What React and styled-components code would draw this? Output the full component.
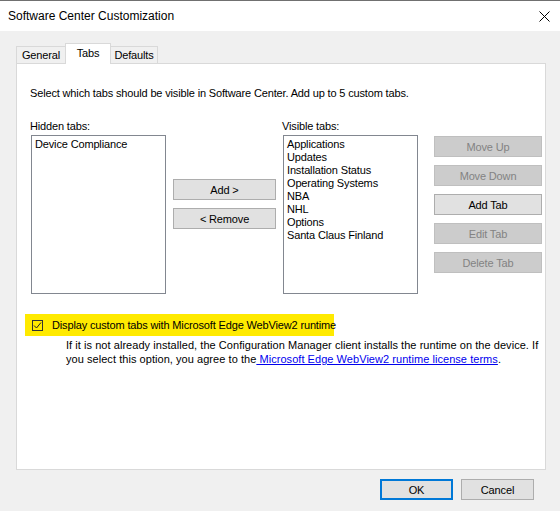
import React, { useState } from 'react';
import styled, { createGlobalStyle } from 'styled-components';

const GlobalStyle = createGlobalStyle`
    html, body {
        margin: 0;
        padding: 0;
        background: #f0f0f0;
    }
    body {
        font-family: "Liberation Sans", Arial, sans-serif;
        font-size: 11px;
        letter-spacing: -0.15px;
        color: #000;
    }
`;

const hiddenTabs = ['Device Compliance'];

const visibleTabs = [
    'Applications',
    'Updates',
    'Installation Status',
    'Operating Systems',
    'NBA',
    'NHL',
    'Options',
    'Santa Claus Finland',
];

const sideButtons = [
    { label: 'Move Up', disabled: true },
    { label: 'Move Down', disabled: true },
    { label: 'Add Tab', disabled: false },
    { label: 'Edit Tab', disabled: true },
    { label: 'Delete Tab', disabled: true },
];

// tab captions with their widths in px
const pageTabs = [
    { name: 'General', width: 50 },
    { name: 'Tabs', width: 46 },
    { name: 'Defaults', width: 48 },
];

function CheckMark() {
    return (
        <svg width="9" height="9" viewBox="0 0 9 9">
            <path d="M1 4.5 L3.5 7 L8 1.5" fill="none" stroke="#222" strokeWidth="1" />
        </svg>
    );
}

function CloseIcon() {
    return (
        <svg width="11" height="11" viewBox="0 0 11 11">
            <path d="M0.5 0.5 L10.5 10.5 M10.5 0.5 L0.5 10.5" stroke="#000" strokeWidth="1" />
        </svg>
    );
}

function ListBox({ items }) {
    return (
        <List>
            {items.map(item => (
                <ListItem key={item}>{item}</ListItem>
            ))}
        </List>
    );
}

export default function App() {
    const [tab] = useState('Tabs');
    const [useWebView, setUseWebView] = useState(true);

    return (
        <Window>
            <GlobalStyle />
            <TitleBar>
                <Title>Software Center Customization</Title>
                <CloseButton>
                    <CloseIcon />
                </CloseButton>
            </TitleBar>

            <Body>
                <TabStrip>
                    {pageTabs.map(t => (
                        <Tab key={t.name} $active={t.name === tab} $w={t.width}>
                            {t.name}
                        </Tab>
                    ))}
                </TabStrip>

                <Panel>
                    <Intro>Select which tabs should be visible in Software Center. Add up to 5 custom tabs.</Intro>

                    <Columns>
                        <ListColumn>
                            <Label>Hidden tabs:</Label>
                            <ListBox items={hiddenTabs} />
                        </ListColumn>

                        <ButtonColumn $top={59} $w={103} $left={7} $right={6}>
                            <Button>Add &gt;</Button>
                            <Button>&lt; Remove</Button>
                        </ButtonColumn>

                        <ListColumn>
                            <Label>Visible tabs:</Label>
                            <ListBox items={visibleTabs} />
                        </ListColumn>

                        <ButtonColumn $top={16} $w={108} $left={16} $right={0}>
                            {sideButtons.map(b => (
                                <Button key={b.label} disabled={b.disabled}>
                                    {b.label}
                                </Button>
                            ))}
                        </ButtonColumn>
                    </Columns>

                    <Highlight onClick={() => setUseWebView(!useWebView)}>
                        <CheckBox>{useWebView && <CheckMark />}</CheckBox>
                        <span>Display custom tabs with Microsoft Edge WebView2 runtime</span>
                    </Highlight>

                    <Note>
                        If it is not already installed, the Configuration Manager client installs the runtime on the device. If
                        <br />
                        you select this option, you agree to the
                        <Link href="#"> Microsoft Edge WebView2 runtime license terms</Link>.
                    </Note>
                </Panel>

                <Footer>
                    <DialogButton $primary>OK</DialogButton>
                    <DialogButton>Cancel</DialogButton>
                </Footer>
            </Body>
        </Window>
    );
}

const Window = styled.div`
    width: 560px;
    height: 511px;
    display: flex;
    flex-direction: column;
    background: #f0f0f0;
    overflow: hidden;
`;

const TitleBar = styled.div`
    height: 30px;
    border-top: 1px solid #707070;
    background: #fff;
    display: flex;
    align-items: center;
    justify-content: space-between;
    padding: 0 10px 0 8px;
`;

const Title = styled.div`
    font-size: 12px;
    letter-spacing: 0;
    line-height: 30px;
    color: #000;
`;

const CloseButton = styled.div`
    display: flex;
    width: 11px;
    height: 11px;
`;

const Body = styled.div`
    padding: 12px 14px 0 16px;
    display: flex;
    flex-direction: column;
`;

const TabStrip = styled.div`
    display: flex;
    align-items: flex-end;
    height: 20px;
`;

const Tab = styled.div`
    position: relative;
    box-sizing: border-box;
    width: ${p => p.$w}px;
    height: ${p => (p.$active ? 21 : 17)}px;
    margin-bottom: ${p => (p.$active ? -1 : 0)}px;
    margin-left: ${p => (p.$active ? -1 : 0)}px;
    margin-right: ${p => (p.$active ? -1 : 0)}px;
    padding-bottom: ${p => (p.$active ? 2 : 0)}px;
    z-index: ${p => (p.$active ? 1 : 0)};
    background: ${p => (p.$active ? '#fff' : '#f0f0f0')};
    border: 1px solid #d9d9d9;
    border-bottom: none;
    display: flex;
    align-items: center;
    justify-content: center;
    line-height: 13px;
`;

const Panel = styled.div`
    box-sizing: border-box;
    width: 530px;
    height: 407px;
    background: #fff;
    border: 1px solid #d9d9d9;
    padding: 23px 0 0 8px;
    display: flex;
    flex-direction: column;
`;

const Intro = styled.div`
    line-height: 13px;
    padding-left: 5px;
`;

const Columns = styled.div`
    display: flex;
    align-items: flex-start;
    margin: 20px 0 0 5px;
`;

const ListColumn = styled.div`
    flex-shrink: 0;
    width: 136px;
    display: flex;
    flex-direction: column;
`;

const Label = styled.div`
    line-height: 13px;
    margin-bottom: 2px;
`;

const List = styled.div`
    box-sizing: border-box;
    width: 135px;
    height: 159px;
    margin-left: 1px;
    border: 1px solid #828790;
    background: #fff;
    padding: 2px 3px;
`;

const ListItem = styled.div`
    line-height: 13px;
    white-space: nowrap;
`;

const ButtonColumn = styled.div`
    flex-shrink: 0;
    width: ${p => p.$w}px;
    margin: ${p => p.$top}px ${p => p.$right}px 0 ${p => p.$left}px;
    display: flex;
    flex-direction: column;
    gap: 8px;
`;

const Button = styled.button`
    box-sizing: border-box;
    height: 21px;
    width: 100%;
    padding: 0;
    font-family: inherit;
    font-size: 11px;
    letter-spacing: inherit;
    border: 1px solid ${p => (p.disabled ? '#bfbfbf' : '#adadad')};
    background: ${p => (p.disabled ? '#cccccc' : '#e1e1e1')};
    color: ${p => (p.disabled ? '#838383' : '#000')};
`;

const Highlight = styled.div`
    box-sizing: border-box;
    width: 309px;
    height: 22px;
    margin-top: 20px;
    background: #ffea00;
    display: flex;
    align-items: center;
    padding-left: 7px;
    white-space: nowrap;
    cursor: default;
`;

const CheckBox = styled.div`
    box-sizing: border-box;
    flex-shrink: 0;
    width: 11px;
    height: 11px;
    border: 1px solid #333;
    display: flex;
    align-items: center;
    justify-content: center;
    margin-right: 9px;
`;

const Note = styled.div`
    margin: 2px 0 0 41px;
    line-height: 14px;
    letter-spacing: 0.05px;
    white-space: nowrap;
`;

const Link = styled.a`
    color: #0000ee;
    text-decoration: underline;
`;

const Footer = styled.div`
    display: flex;
    justify-content: flex-end;
    gap: 8px;
    margin-top: 9px;
    padding-right: 12px;
`;

const DialogButton = styled.button`
    box-sizing: border-box;
    width: 73px;
    height: 21px;
    padding: 0;
    font-family: inherit;
    font-size: 11px;
    letter-spacing: inherit;
    color: #000;
    background: #e1e1e1;
    border: ${p => (p.$primary ? '2px solid #0078d7' : '1px solid #adadad')};
`;
